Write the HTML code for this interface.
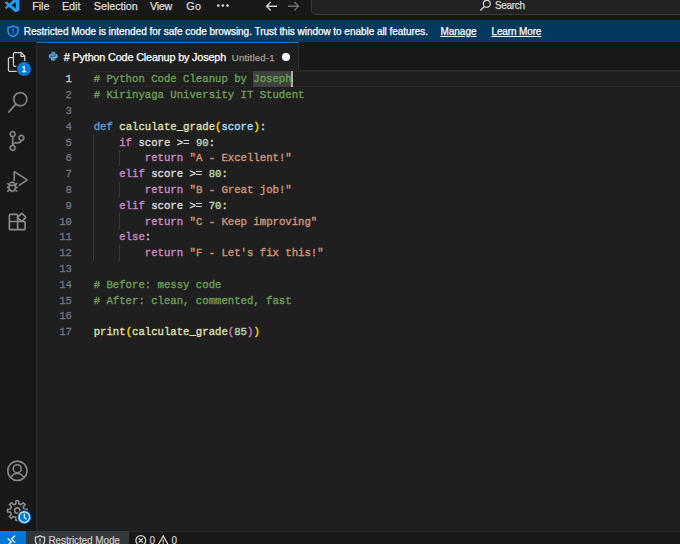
<!DOCTYPE html>
<html lang="en">
<head>
<meta charset="utf-8">
<title>Untitled-1 - Visual Studio Code</title>
<style>
*{box-sizing:border-box;margin:0;padding:0}
html,body{width:680px;height:544px;overflow:hidden;background:#1f1f1f}
body{position:relative;font-family:"Liberation Sans",sans-serif;color:#cccccc;font-size:10.8px}
.abs{position:absolute}
.t{position:absolute;white-space:pre;line-height:1}
/* title bar */
#title{left:0;top:0;width:680px;height:20px;background:#181818}
#title .m{position:absolute;top:0.3px;-webkit-text-stroke:0.25px currentColor;font-size:10.8px;color:#dadada;white-space:pre;line-height:12px;transform-origin:0 0}
#search{left:311px;top:-10px;width:380px;height:25px;background:#222222;border:1px solid #3a3a3a;border-radius:5px}
/* banner */
#banner{left:0;top:20px;width:680px;height:22px;background:#04395e}
#banner .b{position:absolute;top:5.7px;-webkit-text-stroke:0.25px currentColor;font-size:10px;color:#ffffff;white-space:pre;line-height:12px;transform-origin:0 0}
#banner .lnk{text-decoration:underline;text-underline-offset:1px}
/* activity bar */
#act{left:0;top:42px;width:37px;height:489px;background:#181818;border-right:1px solid #2b2b2b}
/* tabs */
#tabs{left:37px;top:42px;width:643px;height:29px;background:#181818;border-bottom:1px solid #2b2b2b}
#tab{left:0;top:0;width:262px;height:29px;background:#1f1f1f;border-top:1px solid #0078d4;border-right:1px solid #2b2b2b}
#tab .x{position:absolute;-webkit-text-stroke:0.25px currentColor;white-space:pre;line-height:12px;transform-origin:0 0}
/* editor */
#ed{left:37px;top:71px;width:643px;height:460px;background:#1f1f1f;overflow:hidden}
.ln{position:absolute;left:0;margin-top:1.350px;-webkit-text-stroke:0.3px currentColor;width:35px;text-align:right;font-family:"Liberation Mono",monospace;font-size:10.65px;color:#6e7681;line-height:15.8px;height:15.8px;white-space:pre}
.cl{position:absolute;left:56.700px;margin-top:1.350px;-webkit-text-stroke:0.4px currentColor;font-family:"Liberation Mono",monospace;font-size:10.65px;color:#d4d4d4;line-height:15.8px;height:15.8px;white-space:pre}
.c{color:#6a9955}.k{color:#569cd6}.f{color:#dcdcaa}.p{color:#c586c0}.s{color:#ce9178}.n{color:#b5cea8}.v{color:#9cdcfe}.y{color:#ffd700}.q{color:#da70d6}
.g{position:absolute;width:1px;background:#383838}
/* status */
#status{left:0;top:531px;width:680px;height:13px;background:#181818;border-top:1px solid #2b2b2b}
#status .st{position:absolute;top:2.600px;-webkit-text-stroke:0.2px currentColor;font-size:10px;color:#cccccc;white-space:pre;line-height:12px;transform-origin:0 0}
svg{position:absolute;overflow:visible}
</style>
</head>
<body>

<!-- TITLE BAR -->
<div id="title" class="abs">
  <svg style="left:4.600px;top:-1.700px" width="14.400" height="14.400" viewBox="0 0 100 100"><path fill="#1f9cf0" d="M96.5 10.8 75.9.9a6.200 6.200 0 0 0-7.100 1.200L29.400 38 12.200 25a4.200 4.200 0 0 0-5.300.2L1.400 30.300a4.200 4.200 0 0 0 0 6.200L16.200 50 1.400 63.600a4.200 4.200 0 0 0 0 6.200l5.500 5a4.200 4.200 0 0 0 5.300.2l17.200-13 39.400 35.900a6.200 6.200 0 0 0 7.100 1.200l20.600-9.900a6.200 6.200 0 0 0 3.500-5.600V16.400a6.200 6.200 0 0 0-3.500-5.600zM75 72.700 45.100 50 75 27.300z"/></svg>
  <span class="m" style="left:32.2px;letter-spacing:-0.03px">File</span>
  <span class="m" style="left:61.9px">Edit</span>
  <span class="m" style="left:93.8px;letter-spacing:-0.06px">Selection</span>
  <span class="m" style="left:150px;letter-spacing:-0.27px">View</span>
  <span class="m" style="left:186.2px;letter-spacing:0.3px">Go</span>
    <svg style="left:0;top:0" width="320" height="20" viewBox="0 0 320 20"><circle cx="218.300" cy="5.600" r="1.350" fill="#d0d0d0"/><circle cx="222.900" cy="5.600" r="1.350" fill="#d0d0d0"/><circle cx="227.500" cy="5.600" r="1.350" fill="#d0d0d0"/><path d="M277 6.200H266.500M270.700 2 266.500 6.200l4.200 4.200" fill="none" stroke="#d0d0d0" stroke-width="1.400"/><path d="M288 6.200h10.500M294.300 2l4.200 4.200-4.200 4.200" fill="none" stroke="#6f6f6f" stroke-width="1.400"/></svg>
  <div id="search" class="abs"></div>
  <svg style="left:470px;top:0" width="30" height="20" viewBox="470 0 30 20"><circle cx="486.800" cy="3.800" r="3.500" fill="none" stroke="#d0d0d0" stroke-width="1.300"/><path d="M484.400 6.400 480.300 10.400" stroke="#d0d0d0" stroke-width="1.400"/></svg>
  <span class="m" style="left:495px;font-size:10px;letter-spacing:-0.34px">Search</span>
</div>

<!-- BANNER -->
<div id="banner" class="abs">
  <svg style="left:7px;top:5px" width="12" height="12" viewBox="0 0 12 12"><path d="M6 .8C4.500 2 2.800 2.500 1 2.500V6c0 2.800 2 4.600 5 5.500 3-.9 5-2.700 5-5.500V2.500C9.200 2.500 7.500 2 6 .8z" fill="none" stroke="#3794ff" stroke-width="1.400"/><rect x="5.400" y="3.500" width="1.200" height="3" fill="#3794ff"/><rect x="5.400" y="7.300" width="1.200" height="1.200" fill="#3794ff"/></svg>
  <span class="b" id="btxt" style="left:23.8px;letter-spacing:-0.04px">Restricted Mode is intended for safe code browsing. Trust this window to enable all features.</span>
  <span class="b lnk" id="bmg" style="left:440.4px">Manage</span>
  <span class="b lnk" id="blm" style="left:491.5px;letter-spacing:-0.14px">Learn More</span>
</div>

<!-- ACTIVITY BAR -->
<div id="act" class="abs">
  <!-- explorer -->
  <svg style="left:6.9px;top:10.1px" width="20" height="20" viewBox="0 0 24 24"><path fill="#d0d0d0" fill-rule="evenodd" d="M17.5 0h-9L7 1.5V6H2.5L1 7.500v15.070L2.500 24h12.070L16 22.570V18h4.700l1.300-1.430V4.500L17.500 0zm0 2.120l2.380 2.380H17.500V2.120zm-3 20.380h-12v-15H7v9.070L8.500 18h6v4.500zm6-6h-12v-15H16V6h4.500v10.500z"/></svg>
  <div class="abs" style="left:16.200px;top:18.900px;width:15.400px;height:15.400px;border-radius:50%;background:#181818"></div>
  <div class="abs" style="left:16.900px;top:19.600px;width:14px;height:14px;border-radius:50%;background:#0078d4;color:#fff;font-size:8.500px;text-align:center;line-height:14px;-webkit-text-stroke:0.3px #fff">1</div>
  <!-- search -->
  <svg style="left:6.800px;top:49.600px" width="21" height="21" viewBox="0 0 24 24"><path fill="#8a8a8a" stroke="#8a8a8a" stroke-width=".4" fill-rule="evenodd" d="M15.250 0a8.250 8.250 0 0 0-6.180 13.720L1 22.880l1.120 1.120 8.050-9.120A8.251 8.251 0 1 0 15.250.010V0zm0 15a6.750 6.750 0 1 1 0-13.500 6.750 6.750 0 0 1 0 13.500z"/></svg>
  <!-- scm -->
  <svg style="left:7.200px;top:89.200px" width="20" height="20" viewBox="0 0 24 24"><path fill="#8a8a8a" stroke="#8a8a8a" stroke-width=".5" fill-rule="evenodd" d="M21.007 8.222A3.738 3.738 0 0 0 15.045 5.200a3.737 3.737 0 0 0 1.156 6.583 2.988 2.988 0 0 1-2.668 1.670h-2.990a4.456 4.456 0 0 0-2.989 1.165V7.400a3.737 3.737 0 1 0-1.494 0v9.117a3.776 3.776 0 1 0 1.816.099 2.990 2.990 0 0 1 2.668-1.667h2.990a4.484 4.484 0 0 0 4.223-3.039 3.736 3.736 0 0 0 3.250-3.687zM4.565 3.738a2.242 2.242 0 1 1 4.484 0 2.242 2.242 0 0 1-4.484 0zm4.484 16.441a2.242 2.242 0 1 1-4.484 0 2.242 2.242 0 0 1 4.484 0zm8.221-9.715a2.242 2.242 0 1 1 0-4.485 2.242 2.242 0 0 1 0 4.485z"/></svg>
  <!-- debug -->
  <svg style="left:6.800px;top:128.800px" width="21" height="21" viewBox="0 0 24 24"><path fill="#8a8a8a" stroke="#8a8a8a" stroke-width=".4" fill-rule="evenodd" d="M10.940 13.500l-1.320 1.320a3.730 3.730 0 0 0-7.240 0L1.060 13.500 0 14.560l1.720 1.720-.220.220V18H0v1.500h1.500v.080c.077.489.214.966.410 1.420L0 22.940 1.060 24l1.650-1.650A4.308 4.308 0 0 0 6 24a4.310 4.310 0 0 0 3.290-1.650L10.940 24 12 22.940 10.090 21c.198-.464.336-.951.410-1.450v-.100H12V18h-1.500v-1.500l-.220-.220L12 14.560l-1.060-1.060zM6 13.500a2.250 2.250 0 0 1 2.250 2.250h-4.500A2.250 2.250 0 0 1 6 13.500zm3 6a3.330 3.330 0 0 1-3 3 3.330 3.330 0 0 1-3-3v-2.250h6v2.250zm14.760-9.900v1.260L13.500 17.370V15.600l8.500-5.370L9 2v9.460a5.070 5.070 0 0 0-1.500-.720V.630L8.640 0l15.120 9.600z"/></svg>
  <!-- extensions -->
  <svg style="left:0;top:0" width="37" height="200" viewBox="0 42 37 200"><g fill="none" stroke="#8a8a8a" stroke-width="1.700"><path d="M17.600 214.400H10.400a1 1 0 0 0-1 1v13.300a1 1 0 0 0 1 1h13.700a1 1 0 0 0 1-1v-6.200a1 1 0 0 0-1-1H9.400M17.600 214.400v15.300"/><rect x="18.700" y="214.400" width="6" height="6" rx=".6" transform="rotate(45 21.700 217.400)"/></g></svg>
  <!-- account -->
  <svg style="left:0;top:0" width="37" height="489" viewBox="0 42 37 489"><g fill="none" stroke="#8a8a8a" stroke-width="1.600"><circle cx="17.400" cy="470.800" r="9.700"/><circle cx="17.200" cy="468.700" r="4.000"/><path d="M10.900 477.400c1.400-2.600 3.700-3.900 6.400-3.900s5 1.300 6.400 3.900"/></g>
  <!-- gear -->
  <g transform="translate(17.300 510.600)" fill="none" stroke="#8a8a8a" stroke-width="1.600" stroke-linejoin="round"><path d="M-1.61 -6.71 L-1.32 -9.81 L1.32 -9.81 L1.61 -6.71 L3.61 -5.88 L6.01 -7.87 L7.87 -6.01 L5.88 -3.61 L6.71 -1.61 L9.81 -1.32 L9.81 1.32 L6.71 1.61 L5.88 3.61 L7.87 6.01 L6.01 7.87 L3.61 5.88 L1.61 6.71 L1.32 9.81 L-1.32 9.81 L-1.61 6.71 L-3.61 5.88 L-6.01 7.87 L-7.87 6.01 L-5.88 3.61 L-6.71 1.61 L-9.81 1.32 L-9.81 -1.32 L-6.71 -1.61 L-5.88 -3.61 L-7.87 -6.01 L-6.01 -7.87 L-3.61 -5.88Z"/><circle cx="0" cy="0" r="2.700"/></g>
  <circle cx="24.300" cy="517.200" r="7.600" fill="#181818"/><circle cx="24.300" cy="517.200" r="6.900" fill="#0078d4"/><circle cx="24.300" cy="517.200" r="5.300" fill="none" stroke="#ffffff" stroke-width="1.100"/><path d="M24.300 513.800v3.600l2.300 1.800" fill="none" stroke="#ffffff" stroke-width="1.100"/></svg>
</div>

<!-- TABS -->
<div id="tabs" class="abs">
  <div id="tab" class="abs">
    <svg style="left:11.150px;top:7.750px" width="10.400" height="10.400" viewBox="0 0 16 16"><path fill="#4f94cf" d="M7.900 1C4.400 1 4.600 2.500 4.600 2.500v1.600H8v.5H3.300S1 4.300 1 7.900s2 3.400 2 3.400h1.200V9.700s-.1-2 2-2h3.300s1.900 0 1.900-1.900V2.900S11.700 1 7.900 1zM6 2.100a.600.600 0 1 1 0 1.200.600.600 0 0 1 0-1.200z"/><path fill="#64a8dc" d="M8.100 15c3.500 0 3.300-1.500 3.300-1.500v-1.600H8v-.5h4.700s2.300.300 2.300-3.300-2-3.400-2-3.400h-1.200v1.600s.100 2-2 2H6.500s-1.900 0-1.900 1.900v3S4.300 15 8.100 15zm1.900-1.100a.600.600 0 1 1 0-1.200.600.600 0 0 1 0 1.200z"/></svg>
    <span class="x" id="tname" style="left:26.8px;top:8.4px;font-size:10.8px;letter-spacing:-0.15px;color:#ffffff"># Python Code Cleanup by Joseph</span>
    <span class="x" id="tdesc" style="left:194.8px;top:8.9px;font-size:9.6px;letter-spacing:0.18px;color:#a0a0a0">Untitled-1</span>
    <div class="abs" style="left:245.200px;top:9.600px;width:8px;height:8px;border-radius:50%;background:#ffffff"></div>
  </div>
</div>

<!-- EDITOR -->
<div id="ed" class="abs">
  <div class="abs" style="left:56px;top:0;width:600px;height:16px;border:1px solid #282828"></div>
  <div class="abs" style="left:216.200px;top:0;width:38.600px;height:16px;background:#404240"></div>
  <div class="abs" style="left:254px;top:0;width:1.500px;height:16px;background:#aeafad"></div>
  <div class="g" style="left:56px;top:63.20px;height:126.40px"></div>
  <div class="g" style="left:82px;top:79.00px;height:15.80px"></div>
  <div class="g" style="left:82px;top:110.60px;height:15.80px"></div>
  <div class="g" style="left:82px;top:142.20px;height:15.80px"></div>
  <div class="g" style="left:82px;top:173.80px;height:15.80px"></div>
  <div id="lines">
<div class="ln" style="top:0.0px;color:#cccccc">1</div><div class="cl" style="top:0.0px"><span class="c"># Python Code Cleanup by Joseph</span></div>
<div class="ln" style="top:15.8px">2</div><div class="cl" style="top:15.8px"><span class="c"># Kirinyaga University IT Student</span></div>
<div class="ln" style="top:31.6px">3</div><div class="cl" style="top:31.6px"></div>
<div class="ln" style="top:47.4px">4</div><div class="cl" style="top:47.4px"><span class="k">def</span> <span class="f">calculate_grade</span><span class="y">(</span><span class="v">score</span><span class="y">)</span>:</div>
<div class="ln" style="top:63.2px">5</div><div class="cl" style="top:63.2px">    <span class="p">if</span> score &gt;= <span class="n">90</span>:</div>
<div class="ln" style="top:79.0px">6</div><div class="cl" style="top:79.0px">        <span class="p">return</span> <span class="s">"A - Excellent!"</span></div>
<div class="ln" style="top:94.8px">7</div><div class="cl" style="top:94.8px">    <span class="p">elif</span> score &gt;= <span class="n">80</span>:</div>
<div class="ln" style="top:110.6px">8</div><div class="cl" style="top:110.6px">        <span class="p">return</span> <span class="s">"B - Great job!"</span></div>
<div class="ln" style="top:126.4px">9</div><div class="cl" style="top:126.4px">    <span class="p">elif</span> score &gt;= <span class="n">70</span>:</div>
<div class="ln" style="top:142.2px">10</div><div class="cl" style="top:142.2px">        <span class="p">return</span> <span class="s">"C - Keep improving"</span></div>
<div class="ln" style="top:158.0px">11</div><div class="cl" style="top:158.0px">    <span class="p">else</span>:</div>
<div class="ln" style="top:173.8px">12</div><div class="cl" style="top:173.8px">        <span class="p">return</span> <span class="s">"F - Let's fix this!"</span></div>
<div class="ln" style="top:189.6px">13</div><div class="cl" style="top:189.6px"></div>
<div class="ln" style="top:205.4px">14</div><div class="cl" style="top:205.4px"><span class="c"># Before: messy code</span></div>
<div class="ln" style="top:221.2px">15</div><div class="cl" style="top:221.2px"><span class="c"># After: clean, commented, fast</span></div>
<div class="ln" style="top:237.0px">16</div><div class="cl" style="top:237.0px"></div>
<div class="ln" style="top:252.8px">17</div><div class="cl" style="top:252.8px"><span class="f">print</span><span class="y">(</span><span class="f">calculate_grade</span><span class="q">(</span><span class="n">85</span><span class="q">)</span><span class="y">)</span></div>
</div><!--/lines-->
</div>

<!-- STATUS BAR -->
<div id="status" class="abs">
  <div class="abs" style="left:0;top:-1px;width:26px;height:14px;background:#0078d4"></div>
  <div class="abs" style="left:26px;top:-1px;width:102.500px;height:14px;background:#35383a"></div>
  <svg style="left:0;top:-1px" width="200" height="14" viewBox="0 530 200 14"><g fill="none" stroke-width="1.300"><path d="M15 534.600 11.500 538.100 15 541.600M7.700 537.400 11.200 540.900 7.700 544.400" stroke="#ffffff"/><g stroke="#d4d4d4" stroke-width="1.250"><path d="M40 534.700c-1.400 1-2.900 1.500-4.600 1.500v3.400c0 2.700 1.800 4.400 4.600 5.300 2.800-.9 4.600-2.600 4.600-5.300v-3.400c-1.700 0-3.200-.5-4.600-1.500z"/><path d="M40 537.600v3M40 541.600v1.200"/><circle cx="140.800" cy="539.500" r="4.900"/><path d="M138.700 537.400l4.200 4.200M142.900 537.400l-4.200 4.200"/><path d="M163.200 534.900 168.600 544.500H157.800z"/><path d="M163.200 538.400v3M163.200 542.300v1.200"/></g></g></svg>
  <span class="st" id="srm" style="left:48.500px;letter-spacing:-0.1px">Restricted Mode</span>
  <span class="st" style="left:149.400px">0</span>
  <span class="st" style="left:171.500px">0</span>
</div>

</body>
</html>
